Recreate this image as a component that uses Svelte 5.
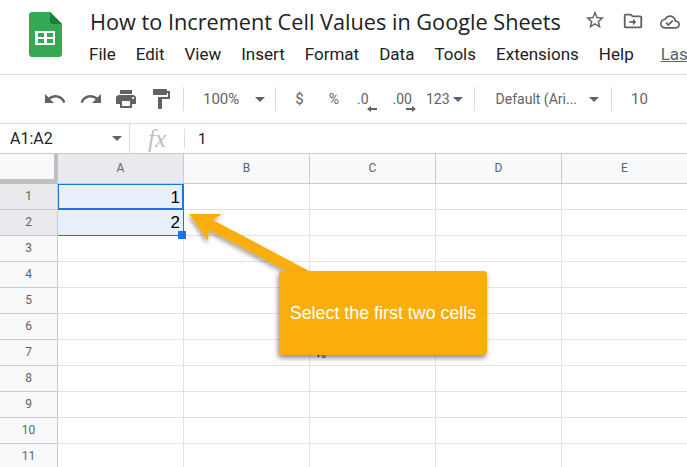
<script>
  const menus = ['File', 'Edit', 'View', 'Insert', 'Format', 'Data', 'Tools', 'Extensions', 'Help'];
  const columns = ['A', 'B', 'C', 'D', 'E'];
  const rows = [1, 2, 3, 4, 5, 6, 7, 8, 9, 10, 11];
</script>

<div class="page">
  <header class="top">
    <svg class="logo" viewBox="0 0 33 45" width="33" height="45">
      <path d="M3 0H21L33 12V42C33 43.7 31.7 45 30 45H3C1.3 45 0 43.7 0 42V3C0 1.3 1.3 0 3 0Z" fill="#34a853" />
      <path d="M21 0L33 12H24C22.300 12 21 10.700 21 9Z" fill="#188038" />
      <path d="M6 19H26V33H6ZM9 21V25H15V21ZM18 21V25H24V21ZM9 27V31H15V27ZM18 27V31H24V27Z" fill="#fff" fill-rule="evenodd" />
    </svg>
    <div class="heading">
      <div class="title-row">
        <span class="title">How to Increment Cell Values in Google Sheets</span>
        <svg class="star" viewBox="0 0 24 24" width="22" height="22"><path d="M22 9.240l-7.190-.62L12 2 9.190 8.630 2 9.240l5.460 4.730L5.820 21 12 17.270 18.180 21l-1.630-7.030L22 9.240zM12 15.400l-3.760 2.270 1-4.280-3.320-2.880 4.380-.38L12 6.100l1.710 4.040 4.380.38-3.320 2.880 1 4.280L12 15.400z" /></svg>
        <svg class="move" viewBox="0 0 24 24" width="22" height="22"><path d="M20 6h-8l-2-2H4c-1.100 0-2 .9-2 2v12c0 1.100.9 2 2 2h16c1.100 0 2-.9 2-2V8c0-1.100-.9-2-2-2zm0 12H4V6h5.170l2 2H20v10z" /><path d="M12 9.500l3.500 3.500-3.500 3.500v-2.500H8v-2h4z" /></svg>
        <svg class="cloud" viewBox="0 0 24 24" width="20" height="20"><path d="M19.350 10.040C18.670 6.590 15.640 4 12 4 9.110 4 6.600 5.640 5.350 8.040 2.340 8.360 0 10.910 0 14c0 3.310 2.690 6 6 6h13c2.760 0 5-2.240 5-5 0-2.640-2.050-4.780-4.650-4.960zM19 18H6c-2.210 0-4-1.790-4-4 0-2.050 1.530-3.760 3.560-3.970l1.070-.11.5-.95C8.080 7.140 9.940 6 12 6c2.620 0 4.880 1.860 5.390 4.430l.3 1.500 1.530.11c1.560.1 2.780 1.410 2.780 2.960 0 1.650-1.350 3-3 3zm-9-3.820l-2.090-2.090L6.500 13.500 10 17l6.010-6.010-1.410-1.410z" /></svg>
      </div>
      <nav class="menu">
        {#each menus as item}
          <span>{item}</span>
        {/each}
        <span class="last">Las</span>
      </nav>
    </div>
  </header>

  <div class="toolbar">
    <svg class="tool first" viewBox="0 0 24 24"><path d="M12.500 8c-2.650 0-5.050.99-6.900 2.600L2 7v9h9l-3.620-3.620c1.390-1.160 3.160-1.880 5.120-1.880 3.540 0 6.550 2.310 7.600 5.500l2.370-.78C21.080 11.030 17.150 8 12.500 8z" /></svg>
    <svg class="tool" viewBox="0 0 24 24"><path d="M18.400 10.600C16.550 8.990 14.150 8 11.500 8c-4.650 0-8.580 3.030-9.960 7.220L3.900 16c1.050-3.190 4.050-5.500 7.600-5.500 1.950 0 3.730.72 5.120 1.880L13 16h9V7l-3.600 3.600z" /></svg>
    <svg class="tool" viewBox="0 0 24 24"><path d="M19 8H5c-1.660 0-3 1.340-3 3v6h4v4h12v-4h4v-6c0-1.660-1.340-3-3-3zm-3 11H8v-5h8v5zm3-7c-.55 0-1-.45-1-1s.45-1 1-1 1 .45 1 1-.45 1-1 1zm-1-9H6v4h12V3z" /></svg>
    <svg class="tool" viewBox="0 0 24 24"><path d="M18 4V3c0-.55-.45-1-1-1H5c-.55 0-1 .45-1 1v4c0 .55.45 1 1 1h12c.55 0 1-.45 1-1V6h1v4H9v11c0 .55.45 1 1 1h2c.55 0 1-.45 1-1v-9h8V4h-3z" /></svg>
    <i class="sep s1"></i>
    <span class="zoom-val">100%</span>
    <i class="caret c1"></i>
    <i class="sep s2"></i>
    <span class="dollar">$</span>
    <span class="percent">%</span>
    <span class="dec d1">.0<svg viewBox="0 0 10 6" width="10" height="6"><path d="M0 3L4 0V2H10V4H4V6Z" /></svg></span>
    <span class="dec d2">.00<svg viewBox="0 0 10 6" width="10" height="6"><path d="M10 3L6 0V2H0V4H6V6Z" /></svg></span>
    <span class="more">123</span>
    <i class="caret c2"></i>
    <i class="sep s3"></i>
    <span class="font">Default (Ari...</span>
    <i class="caret c3"></i>
    <i class="sep s4"></i>
    <span class="size">10</span>
  </div>

  <div class="formula">
    <span class="range">A1:A2</span>
    <i class="caret c4"></i>
    <i class="fsep tall"></i>
    <span class="fx">fx</span>
    <i class="fsep"></i>
    <span class="value">1</span>
  </div>

  <div class="sheet">
    <div class="corner"></div>
    {#each columns as col}
      <div class="colhead" class:active={col === 'A'}>{col}</div>
    {/each}
    {#each rows as row}
      <div class="rowhead" class:active={row < 3}>{row}</div>
      {#each columns as col}
        <div class="cell" class:sel={col === 'A' && row < 3} class:anchor={col === 'A' && row === 1} class:end={col === 'A' && row === 2}>
          {#if col === 'A' && row < 3}{row}{/if}
          {#if col === 'A' && row === 2}<i class="handle"></i>{/if}
        </div>
      {/each}
    {/each}
  </div>

  <svg class="arrow" viewBox="0 0 687 467" width="687" height="467">
    <defs>
      <filter id="soft" x="-20%" y="-20%" width="140%" height="140%">
        <feDropShadow dx="-1" dy="3" stdDeviation="2" flood-color="#000" flood-opacity="0.35" />
      </filter>
    </defs>
    <path d="M189 214H222L213 220L311 272H288L209 230L208 241Z" fill="#f9ae0c" filter="url(#soft)" />
  </svg>

  <span class="cursor">+<small>0</small></span>
  <div class="callout">Select the first two cells</div>
</div>

<style>
  :global(body) {
    margin: 0;
    background: #fff;
  }

  .page {
    position: relative;
    width: 687px;
    height: 467px;
    overflow: hidden;
    font-family: Roboto, "Liberation Sans", sans-serif;
    color: #202124;
  }

  .top {
    display: flex;
    height: 74px;
    border-bottom: 1px solid #dadce0;
    box-sizing: content-box;
  }

  .logo {
    flex: none;
    margin: 12px 0 0 29px;
  }

  .heading {
    flex: none;
    margin-left: 27px;
    white-space: nowrap;
  }

  .title-row {
    display: flex;
    align-items: center;
    height: 24px;
    margin-top: 10px;
  }

  .title {
    font-family: "Open Sans", Roboto, sans-serif;
    font-size: 21.700px;
    line-height: 24px;
    margin-left: 1px;
  }

  .title-row svg {
    fill: #5f6368;
    flex: none;
  }

  .star {
    margin: 0 0 5px 23px;
  }

  .move {
    margin: 0 0 3px 16px;
  }

  .cloud {
    margin-left: 16px;
  }

  .menu {
    display: flex;
    gap: 20px;
    margin-top: 9px;
    font-size: 17px;
    line-height: 22px;
  }

  .last {
    color: #5f6368;
    text-decoration: underline;
    margin-left: 7px;
  }

  .toolbar {
    display: flex;
    align-items: center;
    height: 48px;
    border-bottom: 1px solid #dadce0;
    font-size: 14px;
    color: #5f6368;
    white-space: nowrap;
  }

  .tool {
    width: 24px;
    height: 24px;
    fill: #5f6368;
    margin-left: 11px;
    flex: none;
  }

  .tool.first {
    margin-left: 43px;
  }

  .tool.first + .tool {
    margin-left: 12px;
  }

  .sep {
    width: 1px;
    height: 24px;
    background: #dadce0;
    flex: none;
  }

  .s1 { margin-left: 10px; }
  .s2 { margin-left: 10px; }
  .s3 { margin-left: 11px; }
  .s4 { margin-left: 12px; }

  .caret {
    width: 0;
    height: 0;
    border-left: 5px solid transparent;
    border-right: 5px solid transparent;
    border-top: 5px solid #5f6368;
    flex: none;
  }

  .zoom-val { margin-left: 19px; font-size: 15px; }
  .c1 { margin-left: 16px; }
  .dollar { margin-left: 19px; font-size: 15px; }
  .percent { margin-left: 25px; }
  .c2 { margin-left: 3px; }
  .font { margin-left: 21px; }
  .c3 { margin-left: 12px; }
  .size { margin-left: 19px; font-size: 15px; }

  .dec {
    position: relative;
  }

  .dec svg {
    position: absolute;
    left: 10px;
    top: 15px;
    fill: #5f6368;
  }

  .d2 svg { left: 13px; }

  .d1 { margin-left: 18px; }
  .d2 { margin-left: 24px; }
  .more { margin-left: 14px; }

  .formula {
    display: flex;
    align-items: center;
    height: 29px;
    border-bottom: 1px solid #c9cbce;
    font-size: 14px;
    color: #202124;
  }

  .range {
    margin-left: 10px;
    width: 102px;
    font-size: 16px;
  }

  .fsep {
    width: 1px;
    height: 19px;
    background: #dadce0;
    flex: none;
  }

  .fsep.tall {
    height: 29px;
    margin-left: 7px;
  }

  .fx {
    width: 54px;
    text-align: center;
    font-family: "Liberation Serif", serif;
    font-style: italic;
    font-size: 25px;
    color: #bdc1c6;
  }

  .value {
    margin-left: 13px;
    font-size: 15px;
  }

  .sheet {
    display: grid;
    grid-template-columns: 58px repeat(5, 126px);
    grid-template-rows: 30px repeat(11, 26px);
    font-size: 12px;
    color: #5f6368;
  }

  .corner {
    background: #f8f9fa;
    border-right: 4px solid #c0c0c0;
    border-bottom: 5px solid #c0c0c0;
    box-sizing: border-box;
  }

  .colhead,
  .rowhead {
    display: flex;
    align-items: center;
    justify-content: center;
    background: #f8f9fa;
    box-sizing: border-box;
    border-right: 1px solid #c9cbce;
    border-bottom: 1px solid #c9cbce;
    padding-bottom: 2px;
  }

  .active {
    background: #e8eaed;
  }

  .cell {
    position: relative;
    box-sizing: border-box;
    border-right: 1px solid #e2e3e3;
    border-bottom: 1px solid #e2e3e3;
    font-family: "Liberation Sans", sans-serif;
    font-size: 17px;
    line-height: 25px;
    text-align: right;
    padding-right: 3px;
    color: #000;
  }

  .sel {
    background: #e6effa;
    border-right: 1px solid #1a73e8;
    border-bottom-color: #e6effa;
  }

  .anchor {
    border: 2px solid #1a73e8;
    border-top-width: 1px;
    border-left-width: 1px;
    padding-right: 2px;
  }

  .end {
    border-bottom-color: #1a73e8;
  }

  .handle {
    position: absolute;
    z-index: 1;
    right: -3px;
    bottom: -4px;
    width: 8px;
    height: 8px;
    background: #1a73e8;
  }

  .arrow {
    position: absolute;
    left: 0;
    top: 0;
    z-index: 2;
  }

  .cursor {
    position: absolute;
    z-index: 2;
    left: 315px;
    top: 348px;
    font-size: 12px;
    line-height: 12px;
    color: #000;
  }

  .cursor small {
    font-size: 7px;
  }

  .callout {
    position: absolute;
    z-index: 3;
    left: 279px;
    top: 271px;
    width: 208px;
    height: 84px;
    display: flex;
    align-items: center;
    justify-content: center;
    background: #f9ae0c;
    border-radius: 3px;
    box-shadow: -1px 3px 5px rgba(0, 0, 0, 0.45);
    color: #fff;
    font-family: "Liberation Sans", sans-serif;
    font-size: 17.850px;
  }
</style>
